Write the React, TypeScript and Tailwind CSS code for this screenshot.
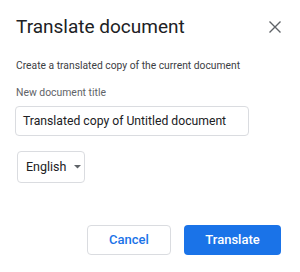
export default function App() {
  return (
    <div className="w-[300px] h-[272px] bg-white font-['Roboto',sans-serif] pl-4 pr-[19px] flex flex-col">
      {/* Header */}
      <div className="flex items-center justify-between mt-[13px] h-7">
        <h1 className="text-[19px] leading-7 text-[#202124]">Translate document</h1>
        <CloseIcon />
      </div>

      <p className="mt-[17px] text-[10.3px] leading-4 text-[#3c4043]">
        Create a translated copy of the current document
      </p>

      <label className="mt-[11px] text-[10.4px] leading-4 text-[#5f6368]">New document title</label>

      <div className="mt-[5px] -ml-px w-[234px] h-[30px] border border-[#dadce0] rounded-[4px] flex items-center pl-[7px] text-[12.2px] text-[#202124]">
        Translated copy of Untitled document
      </div>

      <div className="mt-[15px] ml-px w-[68px] h-8 border border-[#dadce0] rounded-[4px] flex items-center pl-[8px] gap-[8px] text-[12.5px] text-[#202124]">
        English
        <svg width="7" height="4" viewBox="0 0 7 4">
          <path d="M0 0h7L3.5 3.5z" fill="#5f6368" />
        </svg>
      </div>

      {/* Actions */}
      <div className="mt-[42px] flex justify-end gap-[13px]">
        <button className="w-[84px] h-[30px] border border-[#dadce0] rounded-[4px] text-[13px] font-medium text-[#1a73e8] bg-white">
          Cancel
        </button>
        <button className="w-[97px] h-[30px] rounded-[4px] text-[13px] font-medium text-white bg-[#1a73e8]">
          Translate
        </button>
      </div>
    </div>
  )
}

function CloseIcon() {
  return (
    <svg width="12" height="12" viewBox="0 0 12 12">
      <path d="M0.5 0.5l11 11M11.5 0.5l-11 11" stroke="#5f6368" strokeWidth="1.4" />
    </svg>
  )
}
